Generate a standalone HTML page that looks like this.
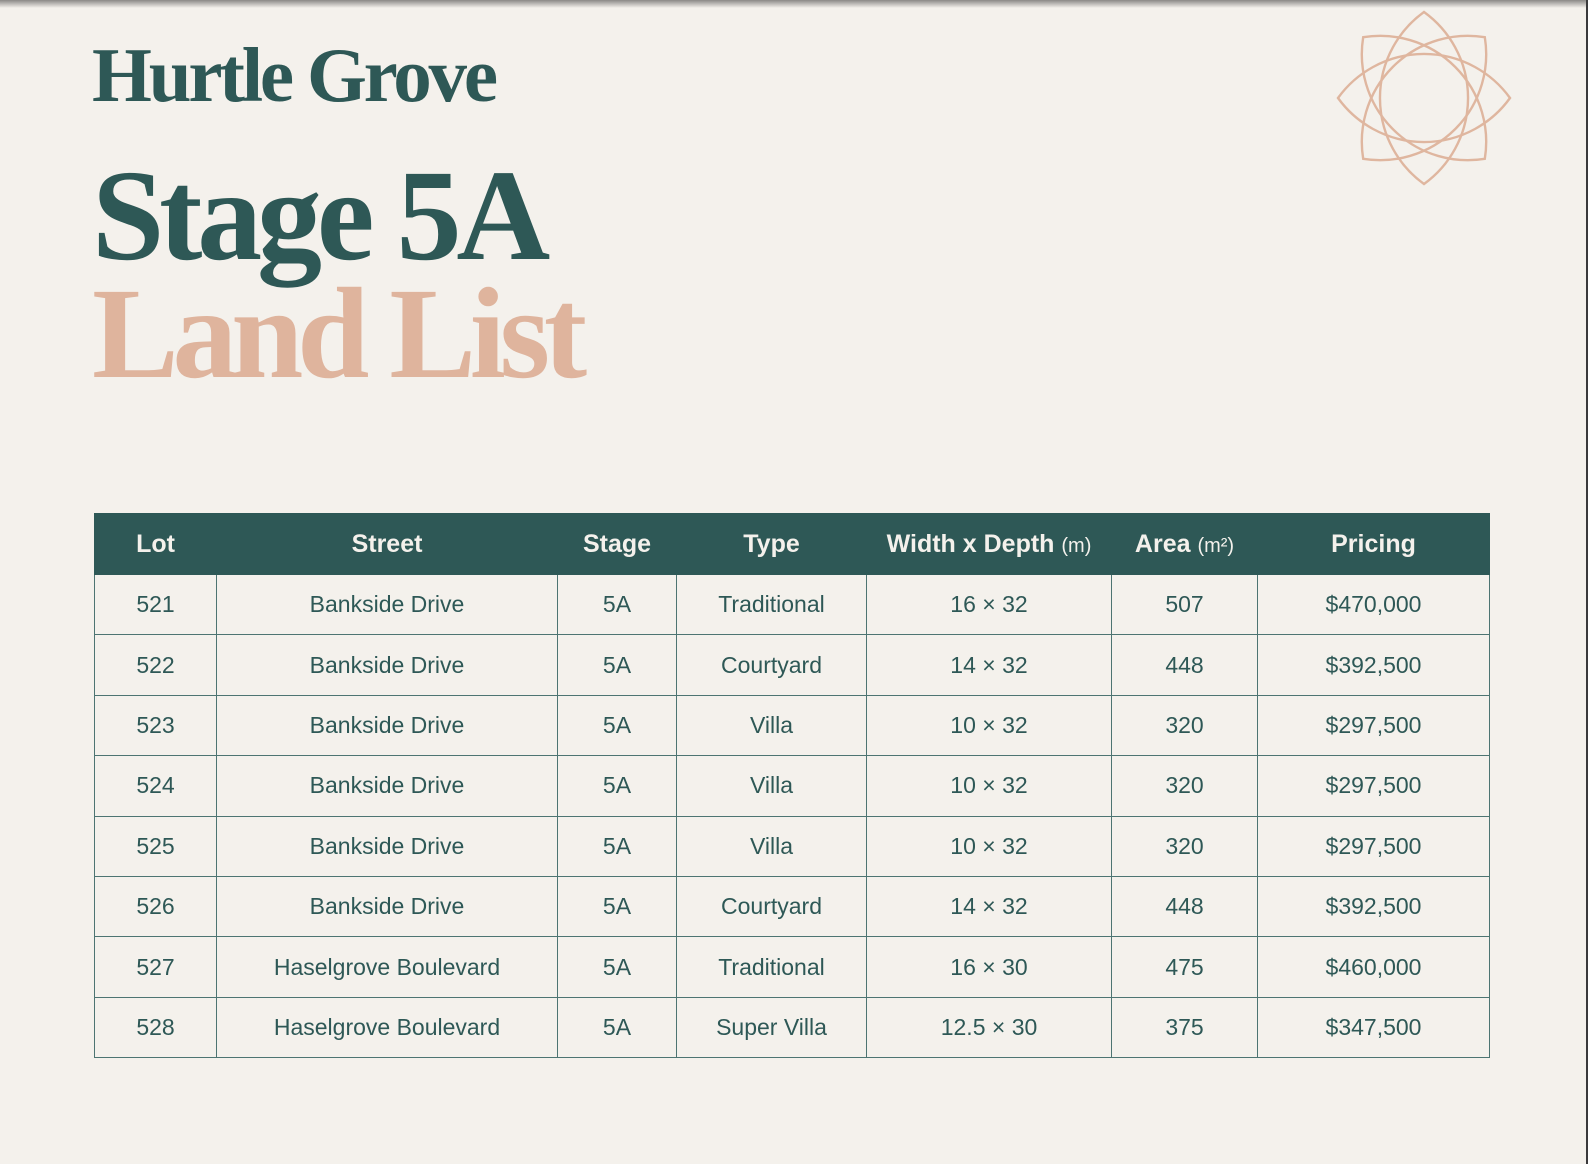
<!DOCTYPE html>
<html><head><meta charset="utf-8"><style>
html,body{margin:0;padding:0}
body{width:1588px;height:1164px;background:#f4f1ec;position:relative;overflow:hidden;font-family:"Liberation Sans",sans-serif}
.topshade{position:absolute;left:0;top:0;width:1588px;height:8px;background:linear-gradient(#8a8886,#f4f1ec)}
.rightbar{position:absolute;right:0;top:0;width:2px;height:1164px;background:#3a3a3c}
.h{position:absolute;left:92px;margin:0;font-family:"Liberation Serif",serif;font-weight:bold;line-height:1;white-space:nowrap}
.t1{top:37px;font-size:77px;color:#2e5856;letter-spacing:-3.2px}
.t2{top:151px;font-size:130px;color:#2e5856;letter-spacing:-5.2px}
.t3{top:269px;font-size:130px;color:#dfb49d;letter-spacing:-6.3px}
table{position:absolute;left:94px;top:513px;border-collapse:collapse;table-layout:fixed;color:#2e5856}
td,th{border:1.5px solid #4d7472;text-align:center;height:59.4px;padding:0;font-size:23px}
th{background:#2e5856;color:#f4f1ec;font-size:25px;height:60px;border-color:#2e5856;border-left:1.5px solid #cfd9d7}
th:first-child{border-left-color:#2e5856}
th small{font-weight:normal;font-size:20px}
</style></head><body>
<div class="topshade"></div><div class="rightbar"></div>
<div class="h t1">Hurtle Grove</div>
<div class="h t2">Stage 5A</div>
<div class="h t3">Land List</div>
<svg style="position:absolute;left:1334px;top:8px" width="180" height="180" viewBox="-90 -90 180 180">
<g fill="none" stroke="#dfb69f" stroke-width="2.4">
<path d="M0,-86 A106,106 0 0 1 0,86 A106,106 0 0 1 0,-86Z"/>
<path d="M0,-86 A106,106 0 0 1 0,86 A106,106 0 0 1 0,-86Z" transform="rotate(45)"/>
<path d="M0,-86 A106,106 0 0 1 0,86 A106,106 0 0 1 0,-86Z" transform="rotate(90)"/>
<path d="M0,-86 A106,106 0 0 1 0,86 A106,106 0 0 1 0,-86Z" transform="rotate(135)"/>
</g></svg>
<table>
<colgroup><col style="width:122px"><col style="width:341px"><col style="width:119px"><col style="width:190px"><col style="width:245px"><col style="width:146px"><col style="width:232px"></colgroup>
<tr><th>Lot</th><th>Street</th><th>Stage</th><th>Type</th><th>Width x Depth <small>(m)</small></th><th>Area <small>(m²)</small></th><th>Pricing</th></tr>
<tr><td>521</td><td>Bankside Drive</td><td>5A</td><td>Traditional</td><td>16 × 32</td><td>507</td><td>$470,000</td></tr>
<tr><td>522</td><td>Bankside Drive</td><td>5A</td><td>Courtyard</td><td>14 × 32</td><td>448</td><td>$392,500</td></tr>
<tr><td>523</td><td>Bankside Drive</td><td>5A</td><td>Villa</td><td>10 × 32</td><td>320</td><td>$297,500</td></tr>
<tr><td>524</td><td>Bankside Drive</td><td>5A</td><td>Villa</td><td>10 × 32</td><td>320</td><td>$297,500</td></tr>
<tr><td>525</td><td>Bankside Drive</td><td>5A</td><td>Villa</td><td>10 × 32</td><td>320</td><td>$297,500</td></tr>
<tr><td>526</td><td>Bankside Drive</td><td>5A</td><td>Courtyard</td><td>14 × 32</td><td>448</td><td>$392,500</td></tr>
<tr><td>527</td><td>Haselgrove Boulevard</td><td>5A</td><td>Traditional</td><td>16 × 30</td><td>475</td><td>$460,000</td></tr>
<tr><td>528</td><td>Haselgrove Boulevard</td><td>5A</td><td>Super Villa</td><td>12.5 × 30</td><td>375</td><td>$347,500</td></tr>
</table>
</body></html>
